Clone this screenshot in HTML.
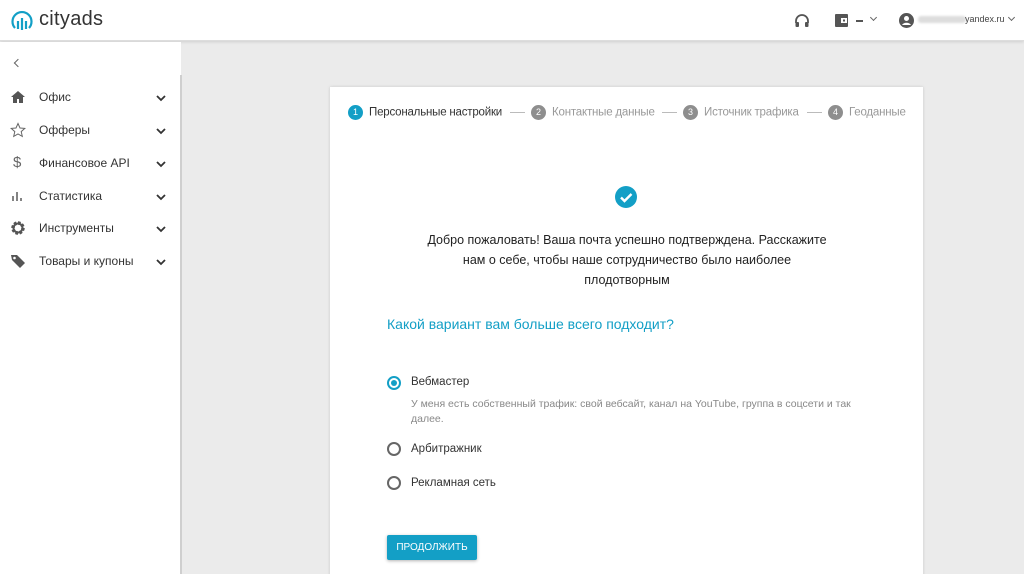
<!DOCTYPE html>
<html><head><meta charset="utf-8"><style>
*{box-sizing:border-box;margin:0;padding:0}
html,body{width:1024px;height:574px;overflow:hidden}
body{background:#ebebeb;font-family:"Liberation Sans","Noto Sans CJK SC",sans-serif;color:#333;position:relative}
.hdr{position:absolute;left:0;top:0;width:1024px;height:41px;background:#fff;border-bottom:1px solid #ddd;box-shadow:0 1px 3px rgba(0,0,0,.12)}
.side{position:absolute;left:0;top:42px;width:181px;height:532px;background:#fff}
.sb{position:absolute;left:180px;top:75px;width:2px;height:499px;background:#cfcfcf}
.item{position:absolute;left:0;width:181px;height:20px;font-size:12px;color:#333}
.item .ic{position:absolute;left:10px;top:2px;width:16px;height:16px}
.item .t{position:absolute;left:39px;top:3px}
.item .ch{position:absolute;left:156px;top:7px}
.card{position:absolute;left:330px;top:87px;width:593px;height:500px;background:#fff;box-shadow:0 0 3px rgba(0,0,0,.15)}
.step{position:absolute;top:18px;font-size:11.5px;color:#999;white-space:nowrap;letter-spacing:-.2px}
.num{display:inline-block;width:15px;height:15px;border-radius:50%;background:#8e8e8e;color:#fff;font-size:9px;text-align:center;line-height:15px;vertical-align:middle;margin-right:6px;letter-spacing:0}
.line{position:absolute;top:25px;height:1px;background:#bbb;width:15px}
.radio{position:absolute;left:57px;width:14px;height:14px;border:2px solid #666;border-radius:50%}
</style></head><body>
<div class="hdr">
<svg style="position:absolute;left:10px;top:9px" width="24" height="24" viewBox="0 0 24 24"><path d="M5 19A9.5 9.5 0 1 1 19 19" fill="none" stroke="#139fc6" stroke-width="2.2"/><path d="M8 20V12M12 21V9M16 20V12" stroke="#139fc6" stroke-width="2.2"/></svg>
<div style="position:absolute;left:39px;top:8px;font-size:20px;color:#333;letter-spacing:.3px">cityads</div>
<svg style="position:absolute;left:794px;top:13px" width="16" height="16" viewBox="0 0 16 16"><path d="M2 10V8a6 6 0 0 1 12 0v2" fill="none" stroke="#555" stroke-width="1.8"/><rect x="1.5" y="9" width="3.5" height="5" rx="1" fill="#555"/><rect x="11" y="9" width="3.5" height="5" rx="1" fill="#555"/></svg>
<svg style="position:absolute;left:835px;top:14px" width="14" height="13" viewBox="0 0 14 13"><rect x="0" y="0" width="13" height="13" rx="1" fill="#555"/><rect x="6" y="4" width="6" height="5" fill="#fff"/><rect x="8" y="5.5" width="2" height="2" fill="#555"/></svg>
<div style="position:absolute;left:856px;top:20px;width:7px;height:2px;background:#555"></div>
<div style="position:absolute;left:871px;top:15px;width:5px;height:5px;border-right:1.3px solid #666;border-bottom:1.3px solid #666;transform:rotate(45deg)"></div>
<svg style="position:absolute;left:899px;top:13px" width="15" height="15" viewBox="0 0 15 15"><circle cx="7.5" cy="7.5" r="7.5" fill="#555"/><circle cx="7.5" cy="5.5" r="2.5" fill="#fff"/><path d="M3 12a5 4 0 0 1 9 0" fill="#fff"/></svg>
<div style="position:absolute;left:918px;top:16px;width:48px;height:7px;background:#ddd;border-radius:3px;filter:blur(1px)"></div>
<div style="position:absolute;left:965px;top:14px;font-size:9px;color:#444">yandex.ru</div>
<div style="position:absolute;left:1009px;top:15px;width:5px;height:5px;border-right:1.3px solid #666;border-bottom:1.3px solid #666;transform:rotate(45deg)"></div>
</div>
<div class="side"></div><div class="sb"></div>
<div style="position:absolute;left:15px;top:60px;width:6px;height:6px;border-left:1.3px solid #666;border-bottom:1.3px solid #666;transform:rotate(45deg)"></div>
<div class="item" style="top:87px"><svg class="ic" viewBox="0 0 16 16"><path d="M8 2L1 8h2v6h4v-4h2v4h4V8h2z" fill="#555"/></svg><span class="t">Офис</span><svg class="ch" width="10" height="8"><path d="M1 2l4 4 4-4" fill="none" stroke="#333" stroke-width="1.8"/></svg></div>
<div class="item" style="top:120px"><svg class="ic" viewBox="0 0 16 16"><path d="M8 1.5l2 4.5 4.8.4-3.6 3.2 1.1 4.8L8 11.9l-4.3 2.5 1.1-4.8L1.2 6.4 6 6z" fill="none" stroke="#666" stroke-width="1"/></svg><span class="t">Офферы</span><svg class="ch" width="10" height="8"><path d="M1 2l4 4 4-4" fill="none" stroke="#333" stroke-width="1.8"/></svg></div>
<div class="item" style="top:153px"><span style="position:absolute;left:13px;top:1px;font-size:15px;color:#666">$</span><span class="t">Финансовое API</span><svg class="ch" width="10" height="8"><path d="M1 2l4 4 4-4" fill="none" stroke="#333" stroke-width="1.8"/></svg></div>
<div class="item" style="top:186px"><svg class="ic" viewBox="0 0 16 16"><path d="M3 13V8M7 13V4M11 13V10" stroke="#666" stroke-width="1.6"/></svg><span class="t">Статистика</span><svg class="ch" width="10" height="8"><path d="M1 2l4 4 4-4" fill="none" stroke="#333" stroke-width="1.8"/></svg></div>
<div class="item" style="top:218px"><svg class="ic" viewBox="0 0 16 16"><circle cx="8" cy="8" r="5" fill="none" stroke="#555" stroke-width="3.5" stroke-dasharray="2.4 1.5"/><circle cx="8" cy="8" r="4.5" fill="none" stroke="#555" stroke-width="2"/></svg><span class="t">Инструменты</span><svg class="ch" width="10" height="8"><path d="M1 2l4 4 4-4" fill="none" stroke="#333" stroke-width="1.8"/></svg></div>
<div class="item" style="top:251px"><svg class="ic" viewBox="0 0 16 16"><path d="M1 2h6l8 8-5 5-8-8z" fill="#555"/><circle cx="4.5" cy="5" r="1.3" fill="#fff"/></svg><span class="t">Товары и купоны</span><svg class="ch" width="10" height="8"><path d="M1 2l4 4 4-4" fill="none" stroke="#333" stroke-width="1.8"/></svg></div>
<div class="card">
<div class="step" style="left:18px;color:#333"><span class="num" style="background:#139fc6">1</span>Персональные настройки</div>
<div class="line" style="left:180px"></div>
<div class="step" style="left:201px"><span class="num">2</span>Контактные данные</div>
<div class="line" style="left:332px"></div>
<div class="step" style="left:353px"><span class="num">3</span>Источник трафика</div>
<div class="line" style="left:477px"></div>
<div class="step" style="left:498px"><span class="num">4</span>Геоданные</div>
<svg style="position:absolute;left:285px;top:99px" width="22" height="22" viewBox="0 0 22 22"><circle cx="11" cy="11" r="11" fill="#139fc6"/><path d="M6 11.5l3.5 3.5 7-7" fill="none" stroke="#fff" stroke-width="2.4"/></svg>
<div style="position:absolute;left:97px;top:143px;width:400px;text-align:center;font-size:12.5px;line-height:20px;color:#222">Добро пожаловать! Ваша почта успешно подтверждена. Расскажите нам о себе, чтобы наше сотрудничество было наиболее плодотворным</div>
<div style="position:absolute;left:57px;top:229px;font-size:14px;color:#139fc6">Какой вариант вам больше всего подходит?</div>
<div class="radio" style="top:289px;border-color:#139fc6"><div style="position:absolute;left:2px;top:2px;width:6px;height:6px;border-radius:50%;background:#139fc6"></div></div>
<div style="position:absolute;left:81px;top:289px;font-size:11.5px;color:#333">Вебмастер</div>
<div style="position:absolute;left:81px;top:310px;width:460px;font-size:10.5px;line-height:15px;color:#888">У меня есть собственный трафик: свой вебсайт, канал на YouTube, группа в соцсети и так далее.</div>
<div class="radio" style="top:355px"></div>
<div style="position:absolute;left:81px;top:356px;font-size:11.5px;color:#333">Арбитражник</div>
<div class="radio" style="top:389px"></div>
<div style="position:absolute;left:81px;top:390px;font-size:11.5px;color:#333">Рекламная сеть</div>
<div style="position:absolute;left:57px;top:448px;width:90px;height:25px;background:#139fc6;color:#fff;font-size:10px;text-align:center;line-height:25px;border-radius:2px;box-shadow:0 1px 3px rgba(0,0,0,.3)">ПРОДОЛЖИТЬ</div>
</div>
</body></html>
